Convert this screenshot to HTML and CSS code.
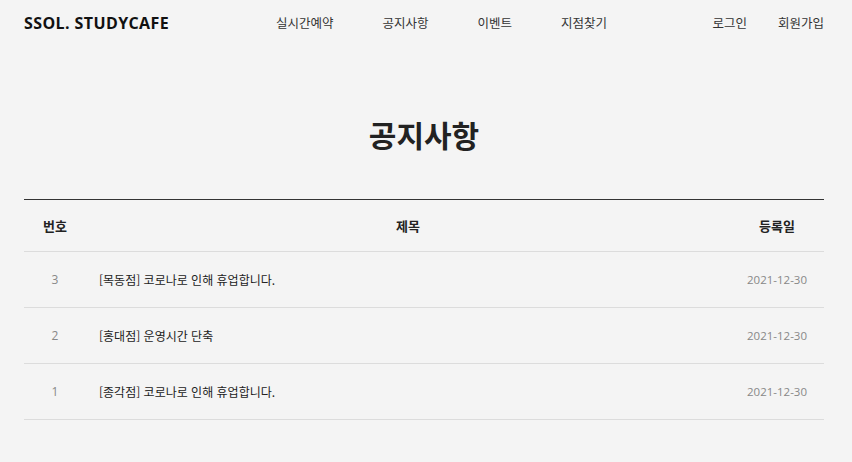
FILE: index.html
```html
<!DOCTYPE html>
<html lang="ko">
<head>
  <meta charset="UTF-8" />
  <meta name="viewport" content="width=device-width, initial-scale=1.0" />
  <title>공지사항 - SSOL. STUDYCAFE</title>
  <link rel="stylesheet" href="styles.css">
</head>
<body>
  <header class="cabecera">
    <div class="logo">SSOL. STUDYCAFE</div>
    <nav class="menu">
      <a href="#">실시간예약</a>
      <a href="#">공지사항</a>
      <a href="#">이벤트</a>
      <a href="#">지점찾기</a>
    </nav>
    <div class="cuenta">
      <a href="#">로그인</a>
      <a href="#">회원가입</a>
    </div>
  </header>

  <main class="contenido">
    <h1 class="titulo">공지사항</h1>

    <table class="tabla-avisos">
      <thead>
        <tr>
          <th class="col-num">번호</th>
          <th class="col-titulo">제목</th>
          <th class="col-fecha">등록일</th>
        </tr>
      </thead>
      <tbody>
        <tr>
          <td class="col-num">3</td>
          <td class="col-titulo">[목동점] 코로나로 인해 휴업합니다.</td>
          <td class="col-fecha">2021-12-30</td>
        </tr>
        <tr>
          <td class="col-num">2</td>
          <td class="col-titulo">[홍대점] 운영시간 단축</td>
          <td class="col-fecha">2021-12-30</td>
        </tr>
        <tr>
          <td class="col-num">1</td>
          <td class="col-titulo">[종각점] 코로나로 인해 휴업합니다.</td>
          <td class="col-fecha">2021-12-30</td>
        </tr>
      </tbody>
    </table>
  </main>
</body>
</html>
```

FILE: styles.css
```css
body {
  margin: 0;
  padding: 0;
  font-family: 'Noto Sans CJK KR', 'Noto Sans', sans-serif;
  background-color: #f4f4f4;
  color: #222;
}

a {
  color: inherit;
  text-decoration: none;
}

.cabecera {
  height: 45px;
  padding: 0 28px 0 24px;
  display: flex;
  align-items: center;
}

.logo {
  width: 252px;
  font-family: 'Open Sans', sans-serif;
  font-weight: bold;
  font-size: 16px;
  letter-spacing: 0.4px;
  color: #111;
}

.menu {
  flex-grow: 1;
  display: flex;
  gap: 49px;
  font-size: 12.5px;
  color: #333;
}

.cuenta {
  display: flex;
  gap: 31px;
  font-size: 12.5px;
  color: #333;
}

.contenido {
  padding: 0 28px 0 24px;
}

.titulo {
  margin: 66px 0 42px;
  text-align: center;
  font-size: 30px;
  font-weight: bold;
  line-height: 46px;
  color: #222;
}

.tabla-avisos {
  width: 100%;
  border-collapse: collapse;
  border-top: 1px solid #333;
}

.tabla-avisos th {
  height: 51px;
  padding: 0;
  font-size: 13px;
  font-weight: bold;
  color: #222;
  border-bottom: 1px solid #dcdcdc;
}

.tabla-avisos td {
  height: 55px;
  padding: 0;
  font-size: 12px;
  border-bottom: 1px solid #dcdcdc;
}

.col-num {
  width: 62px;
  text-align: center;
}

td.col-num {
  font-family: 'Open Sans', sans-serif;
  color: #888;
}

td.col-titulo {
  padding-left: 13px;
  text-align: left;
  color: #222;
}

.col-fecha {
  width: 94px;
  text-align: center;
}

td.col-fecha {
  font-family: 'Open Sans', sans-serif;
  font-size: 11.5px;
  color: #888;
}
```
